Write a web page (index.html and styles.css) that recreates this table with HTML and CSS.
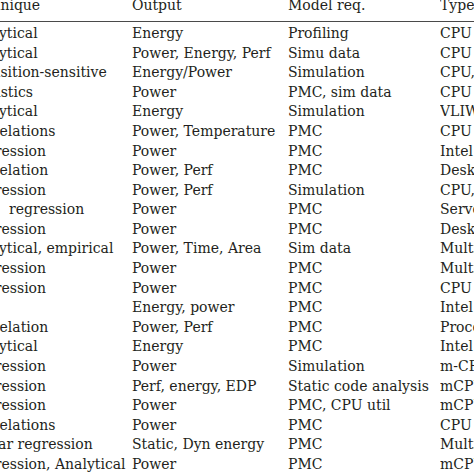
FILE: index.html
```html
<!DOCTYPE html>
<html lang="en">
<head>
<meta charset="utf-8">
<title>Power models</title>
<link rel="stylesheet" href="styles.css">
</head>
<body>
<div class="sheet">
<table class="models">
<colgroup><col class="c-tech"><col class="c-out"><col class="c-model"><col class="c-type"></colgroup>
<thead>
<tr><th>Technique</th><th>Output</th><th>Model req.</th><th>Type</th></tr>
</thead>
<tbody>
<tr class="first"><td>Analytical</td><td>Energy</td><td>Profiling</td><td>CPU</td></tr>
<tr><td>Analytical</td><td>Power, Energy, Perf</td><td>Simu data</td><td>CPU</td></tr>
<tr><td>Transition-sensitive</td><td>Energy/Power</td><td>Simulation</td><td>CPU, GPU</td></tr>
<tr><td>Statistics</td><td>Power</td><td>PMC, sim data</td><td>CPU</td></tr>
<tr><td>Analytical</td><td>Energy</td><td>Simulation</td><td>VLIW</td></tr>
<tr><td>Correlations</td><td>Power, Temperature</td><td>PMC</td><td>CPU</td></tr>
<tr><td>Regression</td><td>Power</td><td>PMC</td><td>Intel Xeon</td></tr>
<tr><td>Correlation</td><td>Power, Perf</td><td>PMC</td><td>Desktop</td></tr>
<tr><td>Regression</td><td>Power, Perf</td><td>Simulation</td><td>CPU, GPU</td></tr>
<tr><td class="cont">regression</td><td>Power</td><td>PMC</td><td>Server</td></tr>
<tr><td>Regression</td><td>Power</td><td>PMC</td><td>Desktop</td></tr>
<tr><td>Analytical, empirical</td><td>Power, Time, Area</td><td>Sim data</td><td>Multicore</td></tr>
<tr><td>Regression</td><td>Power</td><td>PMC</td><td>Multicore</td></tr>
<tr><td>Regression</td><td>Power</td><td>PMC</td><td>CPU</td></tr>
<tr><td></td><td>Energy, power</td><td>PMC</td><td>Intel Core</td></tr>
<tr><td>Correlation</td><td>Power, Perf</td><td>PMC</td><td>Processor</td></tr>
<tr><td>Analytical</td><td>Energy</td><td>PMC</td><td>Intel Core</td></tr>
<tr><td>Regression</td><td>Power</td><td>Simulation</td><td>m-CPU</td></tr>
<tr><td>Regression</td><td>Perf, energy, EDP</td><td>Static code analysis</td><td>mCPU</td></tr>
<tr><td>Regression</td><td>Power</td><td>PMC, CPU util</td><td>mCPU</td></tr>
<tr><td>Correlations</td><td>Power</td><td>PMC</td><td>CPU</td></tr>
<tr><td>Linear regression</td><td>Static, Dyn energy</td><td>PMC</td><td>Multicore</td></tr>
<tr><td>Regression, Analytical</td><td>Power</td><td>PMC</td><td>mCPU</td></tr>
</tbody>
</table>
</div>
</body>
</html>
```

FILE: styles.css
```css
html, body {
  margin: 0;
  padding: 0;
  background: #ffffff;
}

.sheet {
  width: 474px;
  height: 474px;
  overflow: hidden;
}

.models {
  margin-left: -33px;
  margin-top: -3.65px;
  border-collapse: collapse;
  table-layout: fixed;
  width: 623px;
  font-family: "DejaVu Serif", serif;
  font-size: 14px;
  line-height: 19.6px;
  color: #231f20;
}

.c-tech { width: 165px; }
.c-out { width: 156px; }
.c-model { width: 152px; }
.c-type { width: 150px; }

.models th,
.models td {
  padding: 0;
  text-align: left;
  font-weight: normal;
  white-space: nowrap;
  overflow: hidden;
  vertical-align: top;
}

.models th {
  padding-bottom: 4.75px;
  border-bottom: 1.4px solid #4a4a4a;
}

.models tr.first td {
  padding-top: 2.25px;
}

.models td.cont {
  padding-left: 42px;
}
```
